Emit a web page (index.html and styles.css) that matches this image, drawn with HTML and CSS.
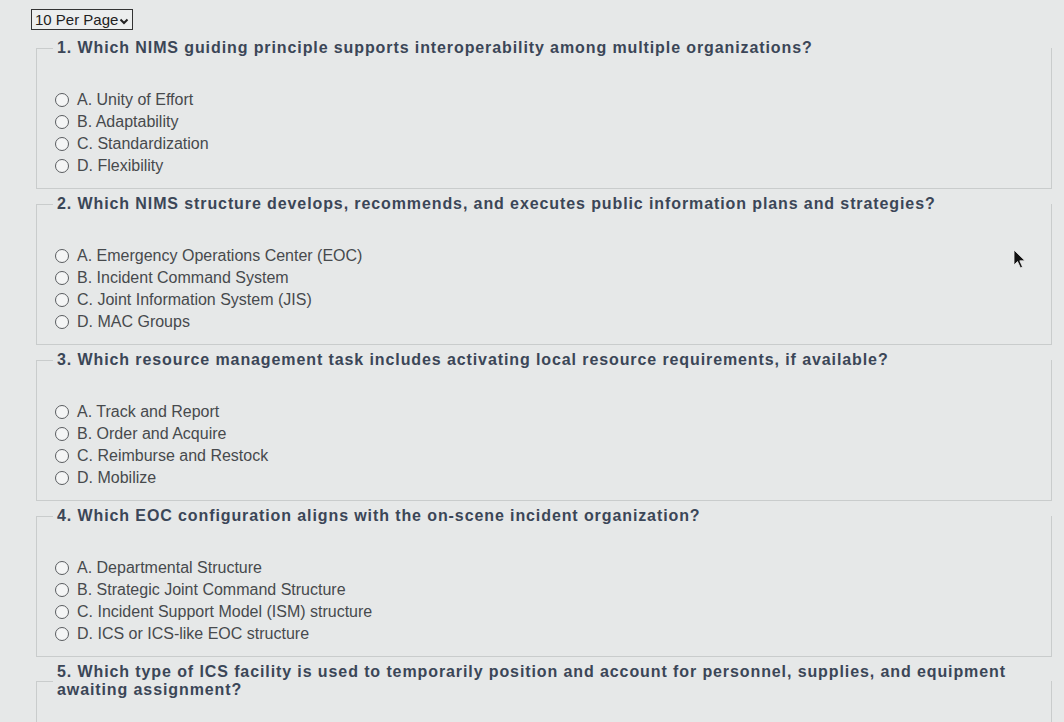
FILE: index.html
```html
<!DOCTYPE html>
<html>
<head>
<meta charset="utf-8">
<link rel="stylesheet" href="styles.css">
</head>
<body>
<div class="page">
  <div class="toolbar">
    <div class="per-page">10 Per Page<svg class="chev" width="10" height="8" viewBox="0 0 10 8"><path d="M1.5 2.5 L5 6 L8.5 2.5" fill="none" stroke="#222" stroke-width="2"/></svg></div>
  </div>

  <fieldset class="question">
    <legend class="q-title">1. Which NIMS guiding principle supports interoperability among multiple organizations?</legend>
    <ul class="options">
      <li class="opt"><span class="radio"></span>A. Unity of Effort</li>
      <li class="opt"><span class="radio"></span>B. Adaptability</li>
      <li class="opt"><span class="radio"></span>C. Standardization</li>
      <li class="opt"><span class="radio"></span>D. Flexibility</li>
    </ul>
  </fieldset>

  <fieldset class="question">
    <legend class="q-title">2. Which NIMS structure develops, recommends, and executes public information plans and strategies?</legend>
    <ul class="options">
      <li class="opt"><span class="radio"></span>A. Emergency Operations Center (EOC)</li>
      <li class="opt"><span class="radio"></span>B. Incident Command System</li>
      <li class="opt"><span class="radio"></span>C. Joint Information System (JIS)</li>
      <li class="opt"><span class="radio"></span>D. MAC Groups</li>
    </ul>
  </fieldset>

  <fieldset class="question">
    <legend class="q-title">3. Which resource management task includes activating local resource requirements, if available?</legend>
    <ul class="options">
      <li class="opt"><span class="radio"></span>A. Track and Report</li>
      <li class="opt"><span class="radio"></span>B. Order and Acquire</li>
      <li class="opt"><span class="radio"></span>C. Reimburse and Restock</li>
      <li class="opt"><span class="radio"></span>D. Mobilize</li>
    </ul>
  </fieldset>

  <fieldset class="question">
    <legend class="q-title">4. Which EOC configuration aligns with the on-scene incident organization?</legend>
    <ul class="options">
      <li class="opt"><span class="radio"></span>A. Departmental Structure</li>
      <li class="opt"><span class="radio"></span>B. Strategic Joint Command Structure</li>
      <li class="opt"><span class="radio"></span>C. Incident Support Model (ISM) structure</li>
      <li class="opt"><span class="radio"></span>D. ICS or ICS-like EOC structure</li>
    </ul>
  </fieldset>

  <fieldset class="question question-last">
    <legend class="q-title q-wrap">5. Which type of ICS facility is used to temporarily position and account for personnel, supplies, and equipment awaiting assignment?</legend>
  </fieldset>
</div>
<svg class="cursor" width="14" height="20" viewBox="0 0 14 20"><path d="M1 1 L1 16 L4.5 12.5 L7.5 19 L9.5 18 L6.8 11.8 L12 11.8 Z" fill="#111" stroke="#eee" stroke-width="0.8"/></svg>
</body>
</html>
```

FILE: styles.css
```css
html, body {
  margin: 0;
  padding: 0;
  background: #e6e8e8;
  height: 722px;
  overflow: hidden;
}
.page {
  display: flex;
  flex-direction: column;
  padding: 9px 12px 0 0;
  font-family: "Liberation Sans", Arial, sans-serif;
}
.toolbar {
  display: flex;
  padding-left: 31px;
  margin-bottom: 9px;
}
.per-page {
  display: flex;
  align-items: center;
  height: 19px;
  padding: 0 3px 0 3px;
  border: 1px solid #333;
  background: #eceeee;
  font-size: 15px;
  color: #222;
  line-height: 19px;
}
.chev { margin-left: 1px; margin-top: 2px; }
.question {
  margin: 0 0 6px 36px;
  padding: 32px 16px 11px 16px;
  border: 1px solid #c9cccc;
  min-width: 0;
}
.question-last {
  padding-bottom: 60px;
}
.q-title {
  box-sizing: border-box;
  padding: 0 4px;
  width: calc(100% + 16px);
  font-weight: bold;
  font-size: 16px;
  line-height: 18px;
  letter-spacing: 0.9px;
  color: #3b4657;
  background: #e6e8e8;
}
.q-wrap {
  padding-right: 30px;
}
.options {
  list-style: none;
  margin: 0;
  padding: 0 0 0 2px;
}
.opt {
  display: flex;
  align-items: center;
  height: 22px;
  font-size: 16px;
  color: #474a4d;
}
.radio {
  width: 12px;
  height: 12px;
  border: 1px solid #5a5d60;
  border-radius: 50%;
  background: #f4f5f5;
  margin-right: 8px;
  flex: none;
}
.cursor {
  position: absolute;
  left: 1013px;
  top: 249px;
}
```
